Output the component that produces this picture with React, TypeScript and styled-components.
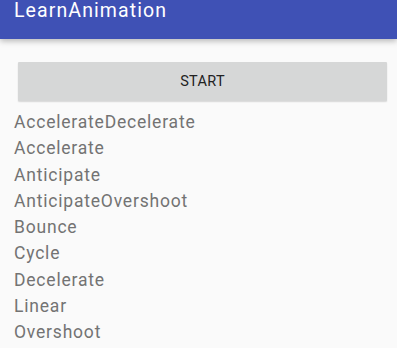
import React from "react";
import styled, { createGlobalStyle } from "styled-components";

const GlobalStyle = createGlobalStyle`
  html, body {
    margin: 0;
    padding: 0;
    background: #fafafa;
  }
  body {
    font-family: Roboto, "Noto Sans", "Liberation Sans", sans-serif;
  }
`;

const Screen = styled.div`
  width: 397px;
  height: 348px;
  overflow: hidden;
  background: #fafafa;
  display: flex;
  flex-direction: column;
`;

const Toolbar = styled.header`
  height: 39px;
  flex-shrink: 0;
  background: #3f51b5;
  box-shadow: 0 2px 6px rgba(0, 0, 0, 0.28);
  padding: 0 14px;
  position: relative;
  z-index: 1;
`;

const Title = styled.h1`
  margin: 0;
  color: #ffffff;
  font-size: 19.5px;
  font-weight: 400;
  letter-spacing: 1.1px;
  line-height: 21px;
`;

const Content = styled.main`
  display: flex;
  flex-direction: column;
  padding: 23px 10px 0 13px;
`;

const StartButton = styled.button`
  margin-left: 5px;
  height: 39px;
  border: none;
  border-radius: 1px;
  background: #d6d7d7;
  box-shadow: 0 1px 1.5px rgba(0, 0, 0, 0.14);
  color: #222222;
  font-family: Roboto, "Noto Sans", sans-serif;
  font-size: 14.5px;
  font-weight: 400;
  letter-spacing: 0.3px;
  display: flex;
  align-items: center;
  justify-content: center;
  padding: 0;
`;

const List = styled.ul`
  list-style: none;
  margin: 8px 0 0;
  padding: 0 0 0 1px;
`;

const Item = styled.li`
  color: #737373;
  font-size: 17.5px;
  letter-spacing: 0.8px;
  line-height: 26.3px;
`;

const interpolators = [
  "AccelerateDecelerate",
  "Accelerate",
  "Anticipate",
  "AnticipateOvershoot",
  "Bounce",
  "Cycle",
  "Decelerate",
  "Linear",
  "Overshoot",
];

export default function App() {
  return (
    <>
      <GlobalStyle />
      <Screen>
        <Toolbar>
          <Title>LearnAnimation</Title>
        </Toolbar>
        <Content>
          <StartButton>START</StartButton>
          <List>
            {interpolators.map((name) => (
              <Item key={name}>{name}</Item>
            ))}
          </List>
        </Content>
      </Screen>
    </>
  );
}
